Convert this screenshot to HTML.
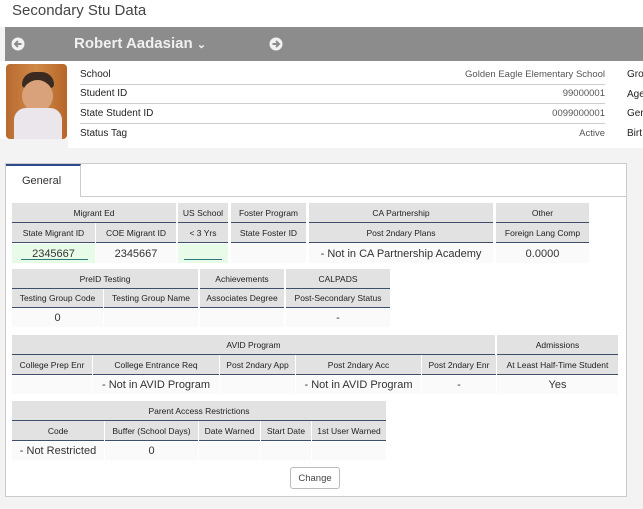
<!DOCTYPE html>
<html><head><meta charset="utf-8"><style>
*{margin:0;padding:0;box-sizing:border-box}
body{width:643px;height:509px;background:#f3f3f3;font-family:"Liberation Sans",sans-serif;position:relative;overflow:hidden;color:#222}
.a{position:absolute}
.c{position:absolute;display:flex;align-items:center;justify-content:center;white-space:nowrap;overflow:hidden}
.h{background:#e2e2e2;font-size:8.5px;color:#222;border-bottom:1.5px solid #3d4f6b}
.d{background:#fafafa;font-size:11px;color:#333}
.g{background:#e8fbe8}
.r{height:19.5px;display:flex;align-items:center;justify-content:space-between}
.r span+span{color:#555;font-size:9.5px}
</style></head><body>
<div class="a" style="left:0;top:0;width:643px;height:27px;background:#fff"></div>
<div class="a" style="left:12px;top:2px;font-size:15px;color:#444">Secondary Stu Data</div>
<div class="a" style="left:5px;top:27px;width:638px;height:34px;background:#8c8c8c"></div>
<svg class="a" style="left:11px;top:37px" width="14" height="14" viewBox="0 0 14 14"><circle cx="7" cy="7" r="6.5" fill="#f2f2f2"/><path d="M10.5 7H4M7 4L4 7l3 3" stroke="#8c8c8c" stroke-width="2" fill="none"/></svg>
<div class="a" style="left:74px;top:35px;font-size:15px;font-weight:bold;color:#f0f0f0">Robert Aadasian <span style="font-size:11px">&#8964;</span></div>
<svg class="a" style="left:269px;top:37px" width="14" height="14" viewBox="0 0 14 14"><circle cx="7" cy="7" r="6.5" fill="#f2f2f2"/><path d="M3.5 7H10M7 4l3 3-3 3" stroke="#8c8c8c" stroke-width="2" fill="none"/></svg>
<div class="a" style="left:0;top:61px;width:643px;height:87px;background:#fff"></div>
<div class="a" style="left:0;top:139px;width:68px;height:9px;background:#f3f3f3"></div>
<div class="a" style="left:6px;top:64px;width:61px;height:75px;border-radius:4px;overflow:hidden;background:linear-gradient(90deg,#b86a30,#d08a48 50%,#b66628)">
<div class="a" style="left:16px;top:8px;width:32px;height:16px;border-radius:14px 14px 4px 4px;background:#3a2a20"></div>
<div class="a" style="left:16px;top:16px;width:31px;height:32px;border-radius:50%;background:#d9a27a"></div>
<div class="a" style="left:8px;top:44px;width:48px;height:34px;border-radius:12px 12px 0 0;background:#eae6ec"></div>
</div>
<div class="a" style="left:80px;top:65px;width:525px;font-size:10px;color:#222">
<div class="r" style="border-bottom:1px solid #ccc"><span>School</span><span>Golden Eagle Elementary School</span></div>
<div class="r" style="border-bottom:1px solid #ccc"><span>Student ID</span><span>99000001</span></div>
<div class="r" style="border-bottom:1px solid #ccc"><span>State Student ID</span><span>0099000001</span></div>
<div class="r"><span>Status Tag</span><span>Active</span></div>
</div>
<div class="a" style="left:627px;top:65px;font-size:10px;line-height:19.5px">Gro<br>Age<br>Ger<br>Birt</div>
<div class="a" style="left:5px;top:163px;width:622px;height:334px;background:#fff;border:1px solid #ccc"></div>
<div class="a" style="left:6px;top:196px;width:620px;height:1px;background:#ccc"></div>
<div class="a" style="left:6px;top:164px;width:75px;height:33px;background:#fff;border-top:2px solid #2d4a8c;border-right:1px solid #ccc"></div>
<div class="a" style="left:22px;top:175px;font-size:11px;color:#333">General</div>

<div class="c h" style="left:12px;top:203px;width:164px;height:20px">Migrant Ed</div>
<div class="c h" style="left:178px;top:203px;width:50px;height:20px">US School</div>
<div class="c h" style="left:231px;top:203px;width:75px;height:20px">Foster Program</div>
<div class="c h" style="left:309px;top:203px;width:184px;height:20px">CA Partnership</div>
<div class="c h" style="left:496px;top:203px;width:93px;height:20px">Other</div>
<div class="c h" style="left:12px;top:223px;width:83px;height:20px">State Migrant ID</div>
<div class="c h" style="left:96px;top:223px;width:80px;height:20px">COE Migrant ID</div>
<div class="c h" style="left:178px;top:223px;width:50px;height:20px">&lt; 3 Yrs</div>
<div class="c h" style="left:231px;top:223px;width:75px;height:20px">State Foster ID</div>
<div class="c h" style="left:309px;top:223px;width:184px;height:20px">Post 2ndary Plans</div>
<div class="c h" style="left:496px;top:223px;width:93px;height:20px">Foreign Lang Comp</div>
<div class="c d g" style="left:12px;top:244px;width:83px;height:19px">2345667</div>
<div class="a" style="left:21px;top:259px;width:67px;height:1px;background:#2a7a7a"></div>
<div class="c d" style="left:96px;top:244px;width:80px;height:19px">2345667</div>
<div class="c d g" style="left:178px;top:244px;width:50px;height:19px"></div>
<div class="a" style="left:184px;top:259px;width:38px;height:1px;background:#2a7a7a"></div>
<div class="c d" style="left:231px;top:244px;width:75px;height:19px"></div>
<div class="c d" style="left:309px;top:244px;width:184px;height:19px">- Not in CA Partnership Academy</div>
<div class="c d" style="left:496px;top:244px;width:93px;height:19px">0.0000</div>

<div class="c h" style="left:12px;top:269px;width:186px;height:20px">PreID Testing</div>
<div class="c h" style="left:200px;top:269px;width:84px;height:20px">Achievements</div>
<div class="c h" style="left:286px;top:269px;width:104px;height:20px">CALPADS</div>
<div class="c h" style="left:12px;top:289px;width:91px;height:19px">Testing Group Code</div>
<div class="c h" style="left:104px;top:289px;width:94px;height:19px">Testing Group Name</div>
<div class="c h" style="left:200px;top:289px;width:84px;height:19px">Associates Degree</div>
<div class="c h" style="left:286px;top:289px;width:104px;height:19px">Post-Secondary Status</div>
<div class="c d" style="left:12px;top:309px;width:91px;height:18px">0</div>
<div class="c d" style="left:104px;top:309px;width:94px;height:18px"></div>
<div class="c d" style="left:200px;top:309px;width:84px;height:18px"></div>
<div class="c d" style="left:286px;top:309px;width:104px;height:18px">-</div>

<div class="c h" style="left:12px;top:335px;width:483px;height:20px">AVID Program</div>
<div class="c h" style="left:497px;top:335px;width:121px;height:20px">Admissions</div>
<div class="c h" style="left:12px;top:355px;width:80px;height:20px">College Prep Enr</div>
<div class="c h" style="left:93px;top:355px;width:126px;height:20px">College Entrance Req</div>
<div class="c h" style="left:220px;top:355px;width:75px;height:20px">Post 2ndary App</div>
<div class="c h" style="left:296px;top:355px;width:125px;height:20px">Post 2ndary Acc</div>
<div class="c h" style="left:422px;top:355px;width:74px;height:20px">Post 2ndary Enr</div>
<div class="c h" style="left:497px;top:355px;width:121px;height:20px">At Least Half-Time Student</div>
<div class="c d" style="left:12px;top:376px;width:80px;height:18px"></div>
<div class="c d" style="left:93px;top:376px;width:126px;height:18px">- Not in AVID Program</div>
<div class="c d" style="left:220px;top:376px;width:75px;height:18px"></div>
<div class="c d" style="left:296px;top:376px;width:125px;height:18px">- Not in AVID Program</div>
<div class="c d" style="left:422px;top:376px;width:74px;height:18px">-</div>
<div class="c d" style="left:497px;top:376px;width:121px;height:18px">Yes</div>

<div class="c h" style="left:12px;top:401px;width:374px;height:20px">Parent Access Restrictions</div>
<div class="c h" style="left:12px;top:421px;width:92px;height:20px">Code</div>
<div class="c h" style="left:105px;top:421px;width:93px;height:20px">Buffer (School Days)</div>
<div class="c h" style="left:199px;top:421px;width:61px;height:20px">Date Warned</div>
<div class="c h" style="left:261px;top:421px;width:50px;height:20px">Start Date</div>
<div class="c h" style="left:312px;top:421px;width:74px;height:20px">1st User Warned</div>
<div class="c d" style="left:12px;top:442px;width:92px;height:18px">- Not Restricted</div>
<div class="c d" style="left:105px;top:442px;width:93px;height:18px">0</div>
<div class="c d" style="left:199px;top:442px;width:61px;height:18px"></div>
<div class="c d" style="left:261px;top:442px;width:50px;height:18px"></div>
<div class="c d" style="left:312px;top:442px;width:74px;height:18px"></div>

<div class="c" style="left:290px;top:467px;width:50px;height:22px;border:1px solid #bbb;border-radius:3px;background:#fff;font-size:9.5px;color:#444">Change</div>
</body></html>
